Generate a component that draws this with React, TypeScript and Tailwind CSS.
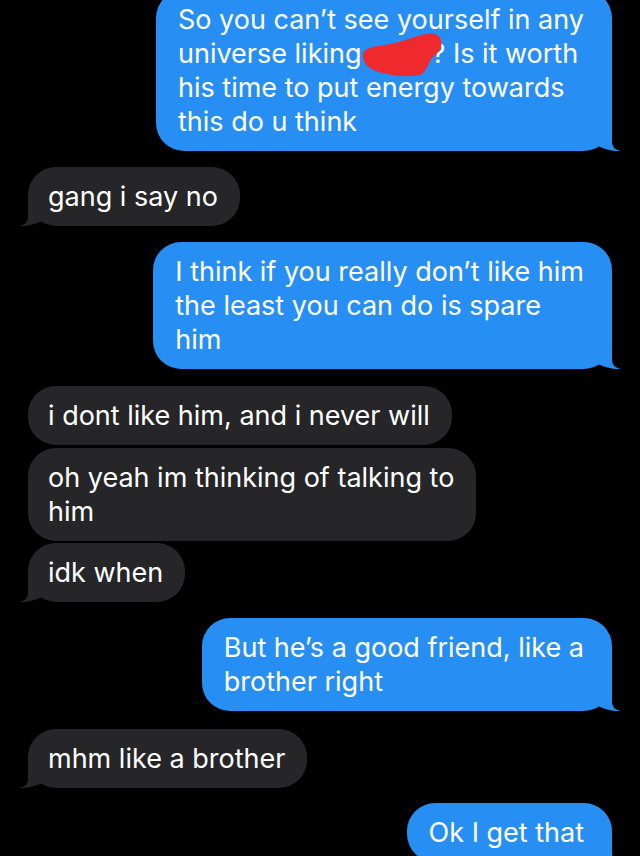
import React from "react";

const font = { fontFamily: "Inter, 'Noto Sans', sans-serif" };

// bubble tail, drawn at the bottom corner of the last bubble in a run
function Tail({ side, color }: { side: "left" | "right"; color: string }) {
  const right = side === "right";
  return (
    <svg
      width="24"
      height="30"
      viewBox="-14 -30 24 30"
      className={
        right
          ? "absolute bottom-0 right-[-10px]"
          : "absolute bottom-0 left-[-10px] -scale-x-100"
      }
    >
      <path
        d="M0 -29 L0 -10 C0 -4 3 -1 9 0 C3 0.5 -6 -1 -13 -4.5 L-13 -29 Z"
        fill={color}
      />
    </svg>
  );
}

function Blue({
  children,
  tail,
  className = "",
}: {
  children: React.ReactNode;
  tail?: boolean;
  className?: string;
}) {
  return (
    <div className={"self-end relative mr-[1px] " + className}>
      <div className="relative bg-[#278ef4] text-white rounded-[28px] pl-[22px] pr-[28px] py-[12.5px] text-[27px] leading-[34px] whitespace-nowrap">
        {children}
      </div>
      {tail && <Tail side="right" color="#278ef4" />}
    </div>
  );
}

function Gray({
  children,
  tail,
  className = "",
}: {
  children: React.ReactNode;
  tail?: boolean;
  className?: string;
}) {
  return (
    <div className={"self-start relative ml-[1px] " + className}>
      <div className="relative bg-[#262628] text-white rounded-[28px] pl-[20px] pr-[22px] py-[12.5px] text-[27px] leading-[34px] whitespace-nowrap">
        {children}
      </div>
      {tail && <Tail side="left" color="#262628" />}
    </div>
  );
}

function Scribble() {
  return (
    <span className="relative inline-block w-[70px] h-[20px]">
      <svg
        width="84"
        height="48"
        viewBox="0 0 84 48"
        className="absolute left-[-3px] top-[-12px]"
      >
        <path
          d="M4 27 C3 20 8 16 20 15 C34 13 48 9 62 4 C72 1 80 2 82 9 C84 16 79 22 73 27 C69 32 68 39 63 43 C55 46 40 46 28 43 C17 41 6 37 4 27 Z"
          fill="#f0292e"
        />
      </svg>
    </span>
  );
}

export default function App() {
  return (
    <div
      className="w-[640px] h-[856px] overflow-hidden bg-black flex flex-col px-[27px]"
      style={font}
    >
      <Blue tail className="mt-[-10px]">
        So you can’t see yourself in any
        <br />
        universe liking
        <Scribble />? Is it worth
        <br />
        his time to put energy towards
        <br />
        this do u think
      </Blue>

      <Gray tail className="mt-[16px]">
        gang i say no
      </Gray>

      <Blue tail className="mt-[16px]">
        I think if you really don’t like him
        <br />
        the least you can do is spare
        <br />
        him
      </Blue>

      <Gray className="mt-[17px]">i dont like him, and i never will</Gray>

      <Gray className="mt-[3px]">
        oh yeah im thinking of talking to
        <br />
        him
      </Gray>

      <Gray tail className="mt-[2px]">
        idk when
      </Gray>

      <Blue tail className="mt-[16px]">
        But he’s a good friend, like a
        <br />
        brother right
      </Blue>

      <Gray tail className="mt-[18px]">
        mhm like a brother
      </Gray>

      <Blue tail className="mt-[15px]">
        Ok I get that
      </Blue>
    </div>
  );
}
